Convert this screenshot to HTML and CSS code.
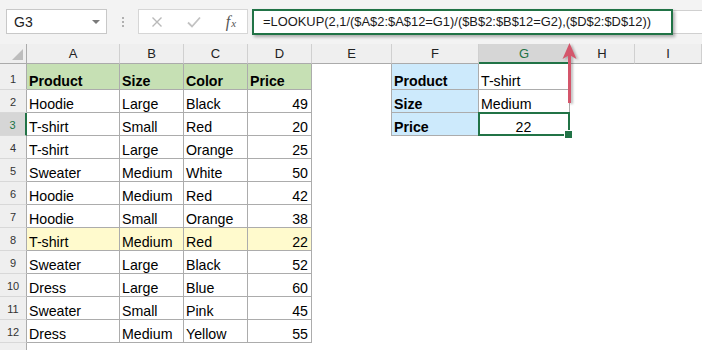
FILE: index.html
```
<!DOCTYPE html>
<html lang="en">
<head>
    <meta charset="UTF-8">
    <title>LOOKUP with two criteria</title>
    <link rel="stylesheet" href="styles.css">
</head>
<body>
<div class="app">
    <!-- formula bar -->
    <div class="toolbar">
        <div class="namebox"><span>G3</span><i class="caret"></i></div>
        <div class="sep"><i></i><i></i><i></i></div>
        <div class="fxbox">
            <span class="ico">
                <svg width="12" height="12" viewBox="0 0 12 12"><path d="M1.5 1.5 L10.5 10.5 M10.5 1.5 L1.5 10.5" stroke="#b9b9b9" stroke-width="1.4" fill="none"/></svg>
            </span>
            <span class="ico">
                <svg width="14" height="12" viewBox="0 0 14 12"><path d="M1 6.5 L5 10.5 L13 1.5" stroke="#c2c2c2" stroke-width="1.8" fill="none"/></svg>
            </span>
            <span class="ico fx">f<small>x</small></span>
        </div>
        <div class="fbar">
            <div class="formula">=LOOKUP(2,1/($A$2:$A$12=G1)/($B$2:$B$12=G2),($D$2:$D$12))</div>
            <div class="frest"></div>
        </div>
    </div>

    <!-- grid -->
    <div class="sheet">
        <div class="ch corner"><i></i></div>
        <div class="ch">A</div><div class="ch">B</div><div class="ch">C</div><div class="ch">D</div>
        <div class="ch">E</div><div class="ch">F</div><div class="ch active">G</div><div class="ch">H</div><div class="ch">I</div>

        <div class="rh">1</div>
        <div class="c t b green">Product</div><div class="c t b green">Size</div><div class="c t b green">Color</div><div class="c t b green">Price</div>
        <div class="c edge"></div>
        <div class="c t b blue">Product</div><div class="c t">T-shirt</div>
        <div class="c rest2"></div>

        <div class="rh">2</div>
        <div class="c t">Hoodie</div><div class="c t">Large</div><div class="c t">Black</div><div class="c t n">49</div>
        <div class="c edge"></div>
        <div class="c t b blue">Size</div><div class="c t">Medium</div>
        <div class="c rest2"></div>

        <div class="rh active">3</div>
        <div class="c t">T-shirt</div><div class="c t">Small</div><div class="c t">Red</div><div class="c t n">20</div>
        <div class="c edge"></div>
        <div class="c t b blue">Price</div><div class="c t ctr sel">22</div>
        <div class="c rest2"></div>

        <div class="rh">4</div>
        <div class="c t">T-shirt</div><div class="c t">Large</div><div class="c t">Orange</div><div class="c t n">25</div>
        <div class="c rest5"></div>

        <div class="rh">5</div>
        <div class="c t">Sweater</div><div class="c t">Medium</div><div class="c t">White</div><div class="c t n">50</div>
        <div class="c rest5"></div>

        <div class="rh">6</div>
        <div class="c t">Hoodie</div><div class="c t">Medium</div><div class="c t">Red</div><div class="c t n">42</div>
        <div class="c rest5"></div>

        <div class="rh">7</div>
        <div class="c t">Hoodie</div><div class="c t">Small</div><div class="c t">Orange</div><div class="c t n">38</div>
        <div class="c rest5"></div>

        <div class="rh">8</div>
        <div class="c t yel">T-shirt</div><div class="c t yel">Medium</div><div class="c t yel">Red</div><div class="c t n yel">22</div>
        <div class="c rest5"></div>

        <div class="rh">9</div>
        <div class="c t">Sweater</div><div class="c t">Large</div><div class="c t">Black</div><div class="c t n">52</div>
        <div class="c rest5"></div>

        <div class="rh">10</div>
        <div class="c t">Dress</div><div class="c t">Large</div><div class="c t">Blue</div><div class="c t n">60</div>
        <div class="c rest5"></div>

        <div class="rh">11</div>
        <div class="c t">Sweater</div><div class="c t">Small</div><div class="c t">Pink</div><div class="c t n">45</div>
        <div class="c rest5"></div>

        <div class="rh">12</div>
        <div class="c t">Dress</div><div class="c t">Medium</div><div class="c t">Yellow</div><div class="c t n">55</div>
        <div class="c rest5"></div>

        <div class="rh"></div>
        <div class="c rest9"></div>
    </div>

    <!-- arrow pointing at the formula -->
    <svg class="arrow" width="20" height="68" viewBox="0 0 20 68">
        <rect x="8" y="12" width="3" height="51" fill="#d4566b"/>
        <path d="M2.5 19 L9.5 3 L16.5 19 L9.5 15 Z" fill="#d4566b"/>
    </svg>
</div>
</body>
</html>
```

FILE: styles.css
```
* {
    margin: 0;
    padding: 0;
    box-sizing: border-box;
}

body {
    font-family: "Liberation Sans", Arial, sans-serif;
    background-color: #fff;
}

.app {
    position: relative;
    width: 702px;
    height: 350px;
    overflow: hidden;
    background-color: #fff;
}

/* formula bar */
.toolbar {
    height: 44px;
    display: flex;
    align-items: flex-start;
    padding: 9px 0 0 6px;
    background-color: #f3f3f3;
}

.namebox {
    width: 101px;
    height: 25px;
    background-color: #fff;
    border: 1px solid #c8c8c8;
    display: flex;
    align-items: center;
    justify-content: space-between;
    padding: 0 6px 0 7px;
    font-size: 14px;
    color: #222;
}

.caret {
    width: 0;
    height: 0;
    border-left: 4px solid transparent;
    border-right: 4px solid transparent;
    border-top: 4px solid #7a7a7a;
}

.sep {
    width: 31px;
    height: 25px;
    display: flex;
    flex-direction: column;
    align-items: center;
    justify-content: center;
    gap: 2px;
}

.sep i {
    width: 2px;
    height: 2px;
    background-color: #b0b0b0;
}

.fxbox {
    width: 110px;
    height: 25px;
    background-color: #fff;
    border: 1px solid #d6d6d6;
    display: flex;
    align-items: center;
    padding-left: 6px;
    gap: 13px;
}

.ico {
    width: 24px;
    display: flex;
    justify-content: center;
    align-items: center;
}

.fx {
    font-family: "Liberation Serif", serif;
    font-style: italic;
    font-size: 16px;
    color: #555;
}

.fx small {
    font-size: 11px;
    margin-left: 1px;
    position: relative;
    top: 1px;
}

.fbar {
    flex: 1;
    display: flex;
    margin-left: 4px;
}

.formula {
    width: 421px;
    height: 26px;
    border: 2px solid #217346;
    background-color: #fff;
    padding-left: 9px;
    font-size: 12.9px;
    line-height: 22px;
    color: #1a1a1a;
    white-space: nowrap;
    box-shadow: 2px 2px 3px rgba(0, 0, 0, 0.3);
    position: relative;
    z-index: 1;
}

.frest {
    flex: 1;
    height: 24px;
    margin-top: 1px;
    background-color: #fff;
    border-top: 1px solid #d0d0d0;
    border-bottom: 1px solid #d0d0d0;
}

/* sheet */
.sheet {
    display: grid;
    grid-template-columns: 27px 93px 64px 64px 64px 80px 87px 91px 65px 1fr;
    grid-template-rows: 20px 26px repeat(12, 23px);
    font-size: 14.2px;
    color: #000;
}

.ch {
    background-color: #efefef;
    border-right: 1px solid #d0d0d0;
    border-bottom: 1px solid #ababab;
    display: flex;
    align-items: center;
    justify-content: center;
    font-size: 13px;
    color: #222;
}

.ch.active {
    background-color: #d6d6d6;
    border-bottom: 2px solid #217346;
    color: #217346;
}

.corner {
    border-right: 1px solid #ababab;
    align-items: flex-end;
    justify-content: flex-end;
    padding: 0 3px 3px 0;
}

.corner i {
    width: 0;
    height: 0;
    border-left: 11px solid transparent;
    border-bottom: 11px solid #bdbdbd;
}

.rh {
    background-color: #efefef;
    border-right: 1px solid #ababab;
    border-bottom: 1px solid #d8d8d8;
    display: flex;
    align-items: flex-end;
    justify-content: center;
    padding-bottom: 4px;
    font-size: 11px;
    color: #333;
}

.rh.active {
    background-color: #d6d6d6;
    border-right: 2px solid #217346;
    color: #217346;
}

.c {
    display: flex;
    align-items: flex-end;
    line-height: 16px;
    padding: 0 3px 0 2px;
    white-space: nowrap;
}

.t {
    border-right: 1px solid #acacac;
    border-bottom: 1px solid #acacac;
}

.edge {
    border-right: 1px solid #acacac;
}

.n {
    justify-content: flex-end;
}

.ctr {
    justify-content: center;
}

.b {
    font-weight: bold;
}

.green {
    background-color: #c6e0b4;
}

.yel {
    background-color: #fffacd;
}

.blue {
    background-color: #cdeafc;
}

.rest2 { grid-column: span 2; }
.rest5 { grid-column: span 5; }
.rest9 { grid-column: span 9; }

/* selected cell G3 */
.sel {
    position: relative;
}

.sel::after {
    content: "";
    position: absolute;
    top: -1px;
    left: -1px;
    right: -1px;
    bottom: -1px;
    border: 2px solid #217346;
}

.sel::before {
    content: "";
    position: absolute;
    right: -4px;
    bottom: -4px;
    width: 7px;
    height: 7px;
    background-color: #217346;
    border: 1px solid #fff;
    z-index: 1;
}

.arrow {
    position: absolute;
    left: 560px;
    top: 40px;
    filter: drop-shadow(2px 1px 1px rgba(0, 0, 0, 0.25));
    z-index: 2;
}
```
